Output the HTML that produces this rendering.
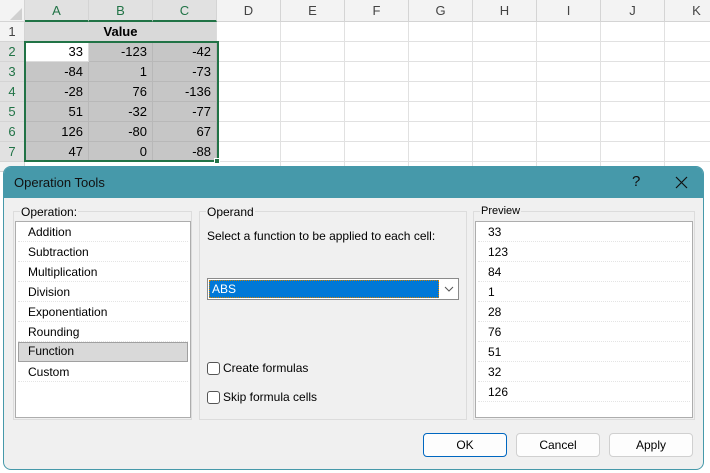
<!DOCTYPE html>
<html><head><meta charset="utf-8"><style>
*{box-sizing:border-box;margin:0;padding:0}
body{width:710px;height:473px;overflow:hidden;background:#fff;font-family:"Liberation Sans",sans-serif;position:relative}
.a{position:absolute}
.ch{position:absolute;top:0;height:22px;background:#f3f3f3;border-right:1px solid #d4d4d4;border-bottom:1px solid #d4d4d4;font-size:13px;color:#444;text-align:center;line-height:22px}
.rh{position:absolute;left:0;width:25px;height:20px;background:#f3f3f3;border-bottom:1px solid #d4d4d4;border-right:1px solid #d4d4d4;font-size:13px;color:#444;text-align:center;line-height:20px}
.c{position:absolute;height:20px;border-right:1px solid #dcdcdc;border-bottom:1px solid #dcdcdc;font-size:13px;color:#000;text-align:right;padding-right:5px;line-height:20px}
.g{background:#c6c6c6;border-color:#b8b8b8}
.d{font-size:12px;color:#000}
.li{position:absolute;left:2px;right:2px;height:20px;line-height:20px;padding-left:10px;font-size:12px;border-bottom:1px dotted #e4e4e4}
.btn{position:absolute;top:433px;width:84px;height:24px;background:#fdfdfd;border:1px solid #d0d0d0;border-radius:4px;text-align:center;line-height:22px;font-size:12px}
.cb{position:absolute;width:13px;height:13px;border:1px solid #555;border-radius:3px;background:#fff}
</style></head><body>
<div class="ch" style="left:0;width:25px"></div>
<svg class="a" style="left:10px;top:8px" width="12" height="12"><polygon points="12,0 12,12 0,12" fill="#d0d0d0"/></svg>
<div class="ch" style="left:25px;width:64px;color:#217346;background:#e1e1e1;border-bottom:2px solid #217346">A</div>
<div class="ch" style="left:89px;width:64px;color:#217346;background:#e1e1e1;border-bottom:2px solid #217346">B</div>
<div class="ch" style="left:153px;width:64px;color:#217346;background:#e1e1e1;border-bottom:2px solid #217346">C</div>
<div class="ch" style="left:217px;width:64px">D</div>
<div class="ch" style="left:281px;width:64px">E</div>
<div class="ch" style="left:345px;width:64px">F</div>
<div class="ch" style="left:409px;width:64px">G</div>
<div class="ch" style="left:473px;width:64px">H</div>
<div class="ch" style="left:537px;width:64px">I</div>
<div class="ch" style="left:601px;width:64px">J</div>
<div class="ch" style="left:665px;width:64px">K</div>
<div class="a" style="left:217px;top:22px;width:493px;height:150px;background:repeating-linear-gradient(to right,transparent 0 63px,#e1e1e1 63px 64px),repeating-linear-gradient(to bottom,transparent 0 19px,#e1e1e1 19px 20px)"></div>
<div class="rh" style="top:22px">1</div>
<div class="rh" style="top:42px;color:#217346;background:#e1e1e1">2</div>
<div class="rh" style="top:62px;color:#217346;background:#e1e1e1">3</div>
<div class="rh" style="top:82px;color:#217346;background:#e1e1e1">4</div>
<div class="rh" style="top:102px;color:#217346;background:#e1e1e1">5</div>
<div class="rh" style="top:122px;color:#217346;background:#e1e1e1">6</div>
<div class="rh" style="top:142px;color:#217346;background:#e1e1e1">7</div>
<div class="rh" style="top:162px;height:10px"></div>
<div class="c" style="left:25px;top:22px;width:192px;background:#d9d9d9;text-align:center;font-weight:bold;padding:0">Value</div>
<div class="c" style="left:25px;top:42px;width:64px">33</div><div class="c g" style="left:89px;top:42px;width:64px">-123</div><div class="c g" style="left:153px;top:42px;width:64px">-42</div>
<div class="c g" style="left:25px;top:62px;width:64px">-84</div><div class="c g" style="left:89px;top:62px;width:64px">1</div><div class="c g" style="left:153px;top:62px;width:64px">-73</div>
<div class="c g" style="left:25px;top:82px;width:64px">-28</div><div class="c g" style="left:89px;top:82px;width:64px">76</div><div class="c g" style="left:153px;top:82px;width:64px">-136</div>
<div class="c g" style="left:25px;top:102px;width:64px">51</div><div class="c g" style="left:89px;top:102px;width:64px">-32</div><div class="c g" style="left:153px;top:102px;width:64px">-77</div>
<div class="c g" style="left:25px;top:122px;width:64px">126</div><div class="c g" style="left:89px;top:122px;width:64px">-80</div><div class="c g" style="left:153px;top:122px;width:64px">67</div>
<div class="c g" style="left:25px;top:142px;width:64px">47</div><div class="c g" style="left:89px;top:142px;width:64px">0</div><div class="c g" style="left:153px;top:142px;width:64px">-88</div>
<div class="a" style="left:24px;top:41px;width:195px;height:121px;border:2px solid #217346"></div>
<div class="a" style="left:214px;top:158px;width:6px;height:6px;background:#217346;border:1px solid #fff"></div>
<div class="a" style="left:3px;top:166px;width:701px;height:304px;background:#f0f0f0;border:1px solid #4699aa;border-radius:8px;overflow:hidden">
 <div class="a" style="left:0;top:0;width:100%;height:31px;background:#4699aa"></div>
 <div class="a" style="left:10px;top:8px;font-size:13px;color:#111">Operation Tools</div>
 <div class="a" style="left:628px;top:6px;font-size:15px;color:#111">?</div>
 <svg class="a" style="left:671px;top:9px" width="13" height="13"><path d="M1 1L12 12M12 1L1 12" stroke="#111" stroke-width="1.2"/></svg>
</div>
<div class="a" style="left:13px;top:211px;width:179px;height:209px;border:1px solid #dcdcdc"></div>
<div class="a d" style="left:20px;top:205px;background:#f0f0f0;padding:0 1px">Operation:</div>
<div class="a" style="left:15px;top:221px;width:176px;height:197px;background:#fff;border:1px solid #adadad">
 <div class="li" style="top:0">Addition</div>
 <div class="li" style="top:20px">Subtraction</div>
 <div class="li" style="top:40px">Multiplication</div>
 <div class="li" style="top:60px">Division</div>
 <div class="li" style="top:80px">Exponentiation</div>
 <div class="li" style="top:100px">Rounding</div>
 <div class="li" style="top:120px;background:#d9d9d9;border:1px solid #a0a0a0;line-height:17px;padding-left:9px">Function</div>
 <div class="li" style="top:140px">Custom</div>
</div>
<div class="a" style="left:199px;top:211px;width:268px;height:209px;border:1px solid #dcdcdc"></div>
<div class="a d" style="left:206px;top:205px;background:#f0f0f0;padding:0 1px">Operand</div>
<div class="a d" style="left:207px;top:229px">Select a function to be applied to each cell:</div>
<div class="a" style="left:207px;top:278px;width:252px;height:22px;background:#fff;border:1px solid #8a8a8a">
 <div class="a" style="left:1px;top:1px;width:230px;height:18px;background:#0078d7;border:1px dotted #d08000;color:#fff;font-size:12px;line-height:16px;padding-left:2px">ABS</div>
 <svg class="a" style="left:236px;top:7px" width="10" height="6"><path d="M1 1L5 5L9 1" stroke="#555" fill="none"/></svg>
</div>
<div class="cb" style="left:207px;top:362px"></div>
<div class="a d" style="left:223px;top:361px">Create formulas</div>
<div class="cb" style="left:207px;top:391px"></div>
<div class="a d" style="left:223px;top:390px">Skip formula cells</div>
<div class="a" style="left:473px;top:211px;width:222px;height:209px;border:1px solid #dcdcdc"></div>
<div class="a" style="left:480px;top:205px;font-size:11px;background:#f0f0f0;padding:0 1px">Preview</div>
<div class="a" style="left:475px;top:221px;width:218px;height:197px;background:#fff;border:1px solid #adadad;font-size:11px">
 <div class="li" style="top:0">33</div><div class="li" style="top:20px">123</div><div class="li" style="top:40px">84</div>
 <div class="li" style="top:60px">1</div><div class="li" style="top:80px">28</div><div class="li" style="top:100px">76</div>
 <div class="li" style="top:120px">51</div><div class="li" style="top:140px">32</div><div class="li" style="top:160px">126</div>
 <div class="li" style="top:180px;border:0"></div>
</div>
<div class="btn" style="left:423px;border:1px solid #0067c0">OK</div>
<div class="btn" style="left:516px">Cancel</div>
<div class="btn" style="left:609px">Apply</div>
</body></html>
